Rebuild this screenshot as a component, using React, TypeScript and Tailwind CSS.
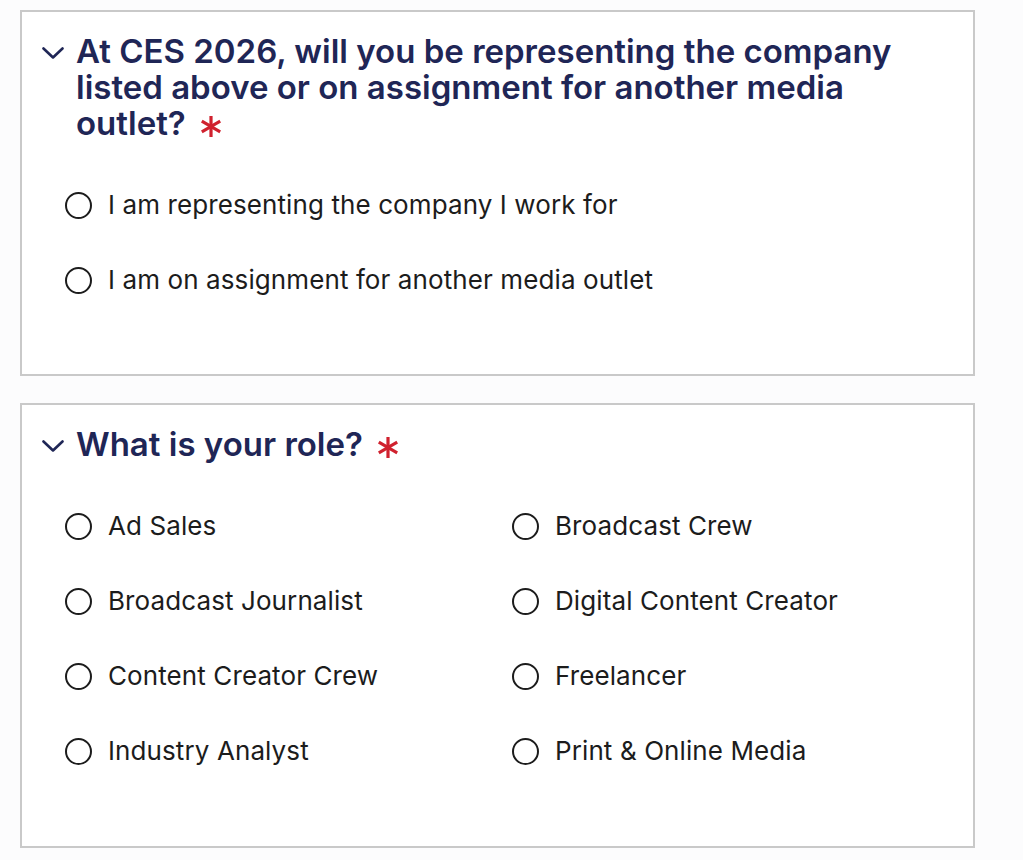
import { useState } from "react";

const ROLES = [
  "Ad Sales",
  "Broadcast Crew",
  "Broadcast Journalist",
  "Digital Content Creator",
  "Content Creator Crew",
  "Freelancer",
  "Industry Analyst",
  "Print & Online Media",
];

function Chevron() {
  return (
    <svg width="22" height="14" viewBox="0 0 22 14" className="shrink-0 mt-[13px]" fill="none">
      <path d="M1.5 2.5l9.5 9 9.5-9" stroke="#1f2656" strokeWidth="2.6" strokeLinecap="round" strokeLinejoin="round" />
    </svg>
  );
}

function Asterisk() {
  return (
    <svg width="22" height="23" viewBox="0 0 22 23" className="inline-block align-[-3px] ml-[14px]" fill="none">
      <g stroke="#d0212e" strokeWidth="3.2" strokeLinecap="butt">
        <path d="M11 1v21" />
        <path d="M1.8 6.2l18.4 10.6" />
        <path d="M1.8 16.8l18.4-10.6" />
      </g>
    </svg>
  );
}

function Radio({ label, checked, onClick }: { label: string; checked: boolean; onClick: () => void }) {
  return (
    <button type="button" onClick={onClick} className="flex items-center gap-[16px] text-left h-[36px]">
      <span className="w-[27px] h-[27px] rounded-full border-2 border-[#1c1c1c] flex items-center justify-center shrink-0">
        {checked && <span className="w-[12px] h-[12px] rounded-full bg-[#1c1c1c]" />}
      </span>
      <span className="text-[26px] text-[#1c1c1c] leading-[36px] tracking-[0.1px]">{label}</span>
    </button>
  );
}

function Question({ title }: { title: string }) {
  return (
    <div className="flex gap-[12px] pl-[20px] pr-[50px]">
      <Chevron />
      <h2 className="text-[33px] font-semibold leading-[36px] text-[#1f2656] tracking-[0px]">
        {title}
        <Asterisk />
      </h2>
    </div>
  );
}

export default function App() {
  const [rep, setRep] = useState("");
  const [role, setRole] = useState("");

  return (
    <div className="min-h-screen bg-[#fcfcfd] pl-[20px] pt-[10px] pb-[14px] font-['Inter','Liberation_Sans',Arial,sans-serif]">
      <div className="w-[955px] flex flex-col gap-[27px]">
        {/* representing question */}
        <section className="bg-white border-2 border-[#c9c9c9] pt-[21px] pb-[76px]">
          <Question title="At CES 2026, will you be representing the company listed above or on assignment for another media outlet?" />
          <div className="flex flex-col gap-[39px] pl-[43px] mt-[46px]">
            {["I am representing the company I work for", "I am on assignment for another media outlet"].map((o) => (
              <Radio key={o} label={o} checked={rep === o} onClick={() => setRep(o)} />
            ))}
          </div>
        </section>

        {/* role question */}
        <section className="bg-white border-2 border-[#c9c9c9] pt-[21px] pb-[77px]">
          <Question title="What is your role?" />
          <div className="grid grid-cols-[447px_1fr] gap-y-[39px] pl-[43px] mt-[46px]">
            {ROLES.map((r) => (
              <Radio key={r} label={r} checked={role === r} onClick={() => setRole(r)} />
            ))}
          </div>
        </section>
      </div>
    </div>
  );
}
